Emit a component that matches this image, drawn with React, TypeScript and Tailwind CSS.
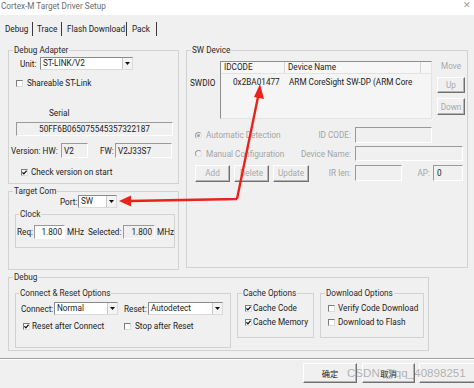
import React, { type FC, type ReactNode } from "react";

const GroupBox: FC<{ title: string; className?: string; legend?: string; children?: ReactNode }> = ({
  title,
  className = "",
  legend = "ml-[4px]",
  children,
}) => (
  <fieldset className={`border border-[#d2d2d2] ${className}`}>
    <legend className={`${legend} px-[1px] leading-[8px] text-[#2a2a2a] whitespace-nowrap`}>{title}</legend>
    {children}
  </fieldset>
);

const Combo: FC<{ w: string; text: string }> = ({ w, text }) => (
  <div
    className={`${w} h-[13px] shrink-0 flex bg-white border border-t-[#8a8a8a] border-l-[#8a8a8a] border-b-[#dadada] border-r-[#dadada]`}
  >
    <span className="flex-1 pl-[2px] leading-[11px] whitespace-nowrap overflow-hidden">{text}</span>
    <span className="w-[10px] h-full flex items-center justify-center bg-[#f4f4f4] border-l border-[#c8c8c8]">
      <svg width="5" height="3" viewBox="0 0 5 3">
        <path d="M0 0 H5 L2.5 3 Z" fill="#111" />
      </svg>
    </span>
  </div>
);

const Field: FC<{ className: string; white?: boolean; children?: ReactNode }> = ({ className, white, children }) => (
  <div
    className={`${className} shrink-0 flex items-center whitespace-nowrap overflow-hidden border border-t-[#9a9a9a] border-l-[#9a9a9a] border-b-white border-r-white ${
      white ? "bg-white" : "bg-[#f0f0f0]"
    }`}
  >
    {children}
  </div>
);

const Check: FC<{ checked?: boolean }> = ({ checked }) => (
  <span className="w-[7px] h-[7px] shrink-0 flex items-center justify-center bg-white border border-t-[#7c7c7c] border-l-[#7c7c7c] border-b-[#dcdcdc] border-r-[#dcdcdc]">
    {checked && (
      <svg width="5" height="5" viewBox="0 0 5 5">
        <path d="M0.4 2.3 L1.9 3.9 L4.6 0.8" stroke="#111" strokeWidth="1.3" fill="none" />
      </svg>
    )}
  </span>
);

const Radio: FC<{ on?: boolean }> = ({ on }) => (
  <span className="w-[7px] h-[7px] shrink-0 rounded-full flex items-center justify-center bg-[#f3f3f3] border border-t-[#9c9c9c] border-l-[#9c9c9c] border-b-[#e2e2e2] border-r-[#e2e2e2]">
    {on && <span className="w-[3px] h-[3px] rounded-full bg-[#a0a0a0]" />}
  </span>
);

const Btn: FC<{ className: string; children?: ReactNode; dim?: boolean }> = ({ className, children, dim }) => (
  <div
    className={`${className} shrink-0 flex items-center justify-center border border-t-white border-l-white border-b-[#707070] border-r-[#707070] shadow-[inset_-1px_-1px_0_#b4b4b4] ${
      dim ? "text-[#a8a8a8]" : "text-[#222]"
    }`}
  >
    {children}
  </div>
);

const App: FC = () => (
  <div className="relative w-[474px] h-[388px] overflow-hidden bg-[#f0f0f0] text-[8.2px] leading-[10px] text-[#222] font-['Roboto','Liberation_Sans',sans-serif]">
    {/* title bar */}
    <div className="h-[15px] bg-white flex items-start justify-between pt-[1px] pl-[1px] pr-[3px] text-[#6a6a6a]">
      <span>Cortex-M Target Driver Setup</span>
      <span className="text-[9px] leading-[9px] text-[#9a9a9a]">✕</span>
    </div>

    {/* tabs */}
    <div className="mt-[7px] h-[14px] flex pl-[4px] whitespace-nowrap">
      <div className="w-[29px] pl-[1px] flex items-center border-r border-[#3a3a3a]">Debug</div>
      <div className="w-[29px] pl-[4px] flex items-center border-r border-[#3a3a3a]">Trace</div>
      <div className="w-[65px] pl-[5px] flex items-center border-r border-[#3a3a3a]">Flash Download</div>
      <div className="w-[30px] pl-[5px] flex items-center border-r border-[#3a3a3a]">Pack</div>
    </div>

    {/* top panels */}
    <div className="mt-[10px] flex items-start pl-[8px] gap-[7px]">
      <div className="w-[171px] flex flex-col">
        <GroupBox title="Debug Adapter" className="h-[138px]">
          <div className="mt-[3px] h-[13px] flex items-center pl-[11px]">
            <span className="w-[20px]">Unit:</span>
            <Combo w="w-[93px]" text="ST-LINK/V2" />
          </div>
          <div className="mt-[7px] h-[12px] flex items-center gap-[4px] pl-[7px]">
            <Check />
            <span>Shareable ST-Link</span>
          </div>
          <div className="mt-[19px] pl-[40px]">Serial</div>
          <Field className="mt-[4px] ml-[7px] w-[157px] h-[14px] justify-center">50FF6B065075545357322187</Field>
          <div className="mt-[7px] h-[15px] flex items-center pl-[2px] whitespace-nowrap">
            <span className="w-[50px]">Version: HW:</span>
            <Field className="w-[27px] h-[15px] pl-[2px]">V2</Field>
            <span className="ml-[12px] w-[15px]">FW:</span>
            <Field className="w-[57px] h-[15px] pl-[2px]">V2J33S7</Field>
          </div>
          <div className="mt-[8px] h-[12px] flex items-center gap-[3px] pl-[12px]">
            <Check checked />
            <span>Check version on start</span>
          </div>
        </GroupBox>

        <GroupBox title="Target Com" className="mt-[3px] h-[83px]">
          <div className="h-[13px] flex items-center pl-[51px] whitespace-nowrap">
            <span className="w-[18px]">Port:</span>
            <Combo w="w-[39px]" text="SW" />
          </div>
          <GroupBox title="Clock" legend="ml-[3px]" className="mt-[2px] ml-[6px] w-[158px] h-[38px]">
            <div className="mt-[7px] h-[14px] flex items-center pl-[1px] whitespace-nowrap">
              <span className="w-[17px]">Req:</span>
              <Field white className="w-[31px] h-[14px] justify-end pr-[2px]">1.800</Field>
              <span className="ml-[2px] w-[21px]">MHz</span>
              <span className="w-[35px]">Selected:</span>
              <Field className="w-[32px] h-[14px] justify-end pr-[2px]">1.800</Field>
              <span className="ml-[2px]">MHz</span>
            </div>
          </GroupBox>
        </GroupBox>
      </div>

      <GroupBox title="SW Device" className="w-[282px] h-[222px]">
        <div className="mt-[7px] flex items-start">
          <span className="w-[33px] pl-[3px] pt-[17px]">SWDIO</span>
          <div className="w-[212px] h-[58px] flex flex-col bg-[#f5f5f5] border border-t-[#8e8e8e] border-l-[#8e8e8e] border-b-[#e4e4e4] border-r-[#e4e4e4]">
            <div className="h-[12px] flex border-b border-[#e2e2e2] bg-[#f7f7f7]">
              <span className="w-[64px] pl-[3px] leading-[11px] border-r border-[#d4d4d4]">IDCODE</span>
              <span className="w-[136px] pl-[3px] leading-[11px] border-r border-[#d4d4d4]">Device Name</span>
              <span className="flex-1" />
            </div>
            <div className="mt-[3px] flex whitespace-nowrap">
              <span className="w-[64px] pl-[12px]">0x2BA01477</span>
              <span className="pl-[4px]">ARM CoreSight SW-DP (ARM Core</span>
            </div>
          </div>
          <div className="ml-[5px] w-[28px] flex flex-col items-center">
            <span className="h-[10px] text-[#a8a8a8]">Move</span>
            <Btn dim className="mt-[6px] w-[28px] h-[16px]">Up</Btn>
            <Btn dim className="mt-[5px] w-[28px] h-[17px]">Down</Btn>
          </div>
        </div>

        <div className="mt-[8px] h-[16px] flex items-center pl-[8px] text-[#a4a4a4] whitespace-nowrap">
          <div className="w-[100px] flex items-center gap-[4px]">
            <Radio on />
            <span>Automatic Detection</span>
          </div>
          <span className="w-[60px] pr-[4px] text-right">ID CODE:</span>
          <Field className="w-[77px] h-[16px]" />
        </div>
        <div className="mt-[3px] h-[15px] flex items-center pl-[8px] text-[#a4a4a4] whitespace-nowrap">
          <div className="w-[100px] flex items-center gap-[4px]">
            <Radio />
            <span>Manual Configuration</span>
          </div>
          <span className="w-[60px] pr-[4px] text-right">Device Name:</span>
          <Field className="w-[108px] h-[15px]" />
        </div>
        <div className="mt-[3px] h-[18px] flex items-center pl-[8px] text-[#a4a4a4] whitespace-nowrap">
          <Btn dim className="w-[35px] h-[17px]">Add</Btn>
          <Btn dim className="ml-[4px] w-[35px] h-[17px]">Delete</Btn>
          <Btn dim className="ml-[4px] w-[36px] h-[17px]">Update</Btn>
          <span className="w-[46px] pr-[4px] text-right">IR len:</span>
          <Field className="w-[47px] h-[16px]" />
          <span className="w-[31px] pr-[3px] text-right">AP:</span>
          <Field className="w-[30px] h-[16px] pl-[3px] text-[#222]">0</Field>
        </div>
      </GroupBox>
    </div>

    {/* debug options */}
    <GroupBox title="Debug" className="mt-[3px] ml-[8px] w-[421px] h-[78px]">
      <div className="mt-[8px] flex items-start pl-[6px]">
        <GroupBox title="Connect & Reset Options" legend="ml-[3px]" className="w-[216px] h-[59px]">
          <div className="mt-[5px] h-[13px] flex items-center pl-[5px] whitespace-nowrap">
            <span className="w-[33px]">Connect:</span>
            <Combo w="w-[64px]" text="Normal" />
            <span className="ml-[6px] w-[24px]">Reset:</span>
            <Combo w="w-[75px]" text="Autodetect" />
          </div>
          <div className="mt-[5px] h-[12px] flex items-center pl-[7px] whitespace-nowrap">
            <div className="w-[101px] flex items-center gap-[2px]">
              <Check checked />
              <span>Reset after Connect</span>
            </div>
            <div className="flex items-center gap-[4px]">
              <Check />
              <span>Stop after Reset</span>
            </div>
          </div>
        </GroupBox>
        <GroupBox title="Cache Options" className="ml-[6px] w-[77px] h-[49px]">
          <div className="mt-[5px] h-[12px] flex items-center gap-[1px] pl-[7px] whitespace-nowrap">
            <Check checked />
            <span>Cache Code</span>
          </div>
          <div className="mt-[2px] h-[12px] flex items-center gap-[1px] pl-[7px] whitespace-nowrap">
            <Check checked />
            <span>Cache Memory</span>
          </div>
        </GroupBox>
        <GroupBox title="Download Options" className="ml-[6px] w-[104px] h-[49px] overflow-hidden">
          <div className="mt-[5px] h-[12px] flex items-center gap-[3px] pl-[7px] whitespace-nowrap">
            <Check />
            <span>Verify Code Download</span>
          </div>
          <div className="mt-[2px] h-[12px] flex items-center gap-[3px] pl-[7px] whitespace-nowrap">
            <Check />
            <span>Download to Flash</span>
          </div>
        </GroupBox>
      </div>
    </GroupBox>

    {/* footer */}
    <div className="mt-[7px] border-t border-[#a0a0a0] border-b border-b-white" />
    <div className="mt-[3px] flex pl-[303px] font-['Noto_Sans_CJK_SC',sans-serif]">
      <Btn className="w-[54px] h-[20px]">确定</Btn>
      <Btn className="ml-[5px] w-[53px] h-[20px]">取消</Btn>
      <Btn className="ml-[4px] w-[60px] h-[20px]" />
    </div>

    {/* watermark */}
    <div className="absolute left-[347px] top-[366px] text-[11.6px] leading-[14px] text-[#7a7a7a]/55 font-['Liberation_Sans',sans-serif] whitespace-nowrap">
      CSDN @qq_40898251
    </div>

    {/* red annotation arrows */}
    <svg className="absolute inset-0 pointer-events-none" width="474" height="388" viewBox="0 0 474 388">
      <path d="M237 199 L129 201 M237 199 L258 97" stroke="#e8221c" strokeWidth="2.4" fill="none" strokeLinejoin="miter" />
      <polygon points="119,201 131,195.5 131,206.5" fill="#e8221c" />
      <polygon points="260,84 254,97 264,99" fill="#e8221c" />
    </svg>
  </div>
);

export default App;
